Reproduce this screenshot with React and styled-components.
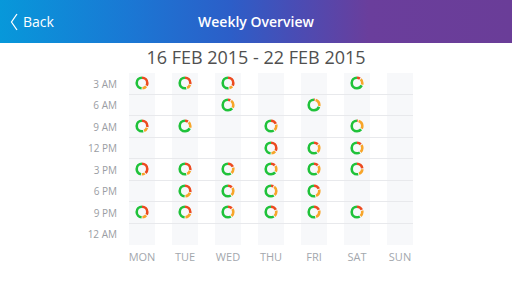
import React from "react";
import styled, { createGlobalStyle } from "styled-components";

const GlobalStyle = createGlobalStyle`
  html, body {
    margin: 0;
    padding: 0;
    background: #ffffff;
    font-family: "Open Sans", "Noto Sans", sans-serif;
  }
`;

const DAYS = ["MON", "TUE", "WED", "THU", "FRI", "SAT", "SUN"];
const HOURS = ["3 AM", "6 AM", "9 AM", "12 PM", "3 PM", "6 PM", "9 PM", "12 AM"];

// [red, orange] share of each ring, the rest is green
const marks = {
  "3 AM": { MON: [0.35, 0.15], TUE: [0.3, 0.15], WED: [0.35, 0.12], SAT: [0.12, 0.2] },
  "6 AM": { WED: [0.1, 0.25], FRI: [0.05, 0.25] },
  "9 AM": { MON: [0.3, 0.15], TUE: [0.12, 0.2], THU: [0.2, 0.2], SAT: [0.05, 0.3] },
  "12 PM": { THU: [0.35, 0.15], FRI: [0.15, 0.25], SAT: [0.15, 0.25] },
  "3 PM": {
    MON: [0.4, 0.12], TUE: [0.3, 0.15], WED: [0.2, 0.2],
    THU: [0.15, 0.2], FRI: [0.15, 0.25], SAT: [0.25, 0.2],
  },
  "6 PM": { TUE: [0.3, 0.2], WED: [0.15, 0.25], THU: [0.1, 0.3], FRI: [0.2, 0.25] },
  "9 PM": {
    MON: [0.35, 0.15], TUE: [0.3, 0.2], WED: [0.15, 0.25],
    THU: [0.2, 0.2], FRI: [0.2, 0.25], SAT: [0.2, 0.2],
  },
};

const R = 5.3;
const C = 2 * Math.PI * R;
const GAP = 0.9;

function Donut({ red, orange }) {
  const green = 1 - red - orange;
  const parts = [
    { color: "#ec4a1f", share: red },
    { color: "#f7a52a", share: orange },
    { color: "#1fc23a", share: green },
  ];
  let offset = 0;
  return (
    <svg width="14" height="14" viewBox="0 0 14 14">
      <g transform="rotate(-90 7 7)">
        {parts.map((p, i) => {
          const len = p.share * C;
          const el = (
            <circle
              key={i}
              cx="7"
              cy="7"
              r={R}
              fill="none"
              stroke={p.color}
              strokeWidth="2.6"
              strokeDasharray={`${Math.max(len - GAP, 0)} ${C}`}
              strokeDashoffset={-offset}
            />
          );
          offset += len;
          return el;
        })}
      </g>
    </svg>
  );
}

export default function App() {
  return (
    <>
      <GlobalStyle />
      <Screen>
        <Header>
          <BackButton>
            <svg width="8" height="18" viewBox="0 0 8 18">
              <polyline
                points="7,1 1.5,9 7,17"
                fill="none"
                stroke="#fff"
                strokeWidth="1.3"
              />
            </svg>
            Back
          </BackButton>
          <Title>Weekly Overview</Title>
          <span />
        </Header>

        <DateRange>16 FEB 2015 - 22 FEB 2015</DateRange>

        <Chart>
          {HOURS.map((hour, r) => (
            <Row key={hour}>
              <TimeLabel>{hour}</TimeLabel>
              <Track $last={r === HOURS.length - 1}>
                {DAYS.map((day) => {
                  const m = marks[hour] && marks[hour][day];
                  return (
                    <Cell key={day}>
                      {m && <Donut red={m[0]} orange={m[1]} />}
                    </Cell>
                  );
                })}
              </Track>
            </Row>
          ))}
          <Row>
            <TimeLabel />
            <DayTrack>
              {DAYS.map((day) => (
                <DayLabel key={day}>{day}</DayLabel>
              ))}
            </DayTrack>
          </Row>
        </Chart>
      </Screen>
    </>
  );
}

const Screen = styled.div`
  width: 512px;
  height: 288px;
  overflow: hidden;
  display: flex;
  flex-direction: column;
`;

const Header = styled.div`
  height: 43px;
  display: grid;
  grid-template-columns: 1fr auto 1fr;
  align-items: center;
  padding: 0 10px;
  box-sizing: border-box;
  background: linear-gradient(
    90deg,
    #0798da 0%,
    #1a78d4 25%,
    #2c5ec8 45%,
    #4a4cb4 58%,
    #6a3e9c 72%,
    #6a3d98 100%
  );
  color: #fff;
`;

const BackButton = styled.div`
  display: flex;
  align-items: center;
  gap: 5px;
  font-size: 14px;
  color: #fff;
`;

const Title = styled.div`
  font-size: 14px;
  font-weight: 600;
  color: #fff;
`;

const DateRange = styled.div`
  margin-top: 1px;
  height: 29px;
  line-height: 26px;
  text-align: center;
  font-size: 18px;
  color: #505050;
`;

const Chart = styled.div`
  display: flex;
  flex-direction: column;
`;

const Row = styled.div`
  display: flex;
  align-items: stretch;
`;

const TimeLabel = styled.div`
  width: 117px;
  margin-right: 12px;
  display: flex;
  align-items: center;
  justify-content: flex-end;
  font-size: 10px;
  color: #9a9da3;
`;

const Track = styled.div`
  display: flex;
  gap: 17px;
  height: 21.5px;
  box-sizing: border-box;
  border-bottom: ${(p) => (p.$last ? "0" : "1.5px solid #e8e9ec")};
`;

const Cell = styled.div`
  width: 26px;
  background: #f7f8fa;
  display: flex;
  align-items: center;
  justify-content: center;
`;

const DayTrack = styled.div`
  display: flex;
  gap: 17px;
  height: 22px;
`;

const DayLabel = styled.div`
  width: 26px;
  display: flex;
  align-items: center;
  justify-content: center;
  white-space: nowrap;
  font-size: 11px;
  color: #a3a7ad;
`;
